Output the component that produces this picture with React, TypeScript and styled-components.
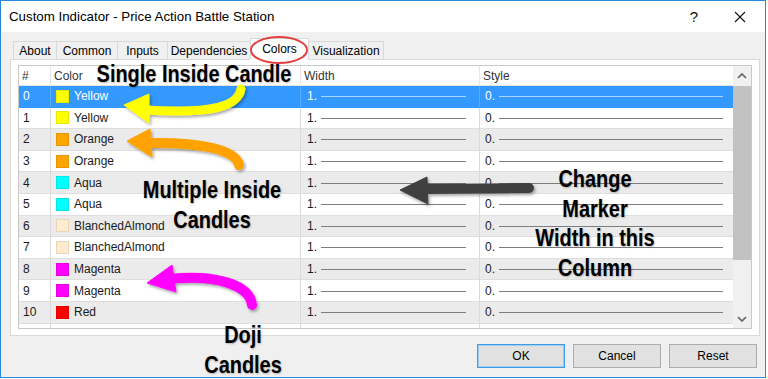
import React from "react";
import styled, { createGlobalStyle } from "styled-components";

const GlobalStyle = createGlobalStyle`
  html, body {
    margin: 0;
    padding: 0;
    background: #ffffff;
  }
  body {
    font-family: "Liberation Sans", Arial, sans-serif;
  }
  * {
    box-sizing: border-box;
  }
`;

const Window = styled.div`
  position: relative;
  width: 766px;
  height: 378px;
  border: 1px solid #2b88d8;
  background: #f0f0f0;
  display: flex;
  flex-direction: column;
  overflow: hidden;
`;

const TitleBar = styled.div`
  flex: none;
  height: 31px;
  display: flex;
  align-items: center;
  background: #ffffff;
  padding: 0 2px 0 8px;
  color: #000;
`;

const TitleText = styled.span`
  flex: 1;
  font-size: 13.3px;
`;

const CaptionButton = styled.div`
  width: 46px;
  height: 31px;
  display: flex;
  align-items: center;
  justify-content: center;
  font-size: 15px;
  color: #111;
`;

const Body = styled.div`
  flex: 1;
  display: flex;
  flex-direction: column;
  padding: 7px 5px 8px 9px;
`;

const TabStrip = styled.div`
  display: flex;
  align-items: flex-end;
  height: 21px;
  padding-left: 4px;
  margin-bottom: -1px;
  position: relative;
  z-index: 1;
`;

const Tab = styled.div<{ $width: number; $active?: boolean }>`
  width: ${({ $width }) => $width}px;
  height: ${({ $active }) => ($active ? 22 : 19)}px;
  margin-left: -1px;
  display: flex;
  align-items: center;
  justify-content: center;
  padding-bottom: ${({ $active }) => ($active ? 1 : 0)}px;
  font-size: 12px;
  color: #000;
  background: ${({ $active }) => ($active ? "#ffffff" : "#f0f0f0")};
  border: 1px solid #d9d9d9;
  border-bottom-color: ${({ $active }) => ($active ? "#ffffff" : "#d9d9d9")};
`;

const Panel = styled.div`
  width: 750px;
  height: 277px;
  background: #ffffff;
  border: 1px solid #d9d9d9;
  padding: 5px 7px 6px 7px;
`;

const Grid = styled.div`
  height: 264px;
  border: 1px solid #c8c8c8;
  display: flex;
  overflow: hidden;
`;

const Table = styled.div`
  flex: 1;
  display: flex;
  flex-direction: column;
  overflow: hidden;
`;

const columns = "32px 250px 179px 254px";

const HeaderRow = styled.div`
  flex: none;
  height: 20px;
  display: grid;
  grid-template-columns: ${columns};
  border-bottom: 1px solid #e2e2e2;
  background: #ffffff;
`;

const HeaderCell = styled.div`
  display: flex;
  align-items: center;
  padding-left: 3px;
  font-size: 12px;
  color: #333;
  border-right: 1px solid #e6e6e6;
`;

const Row = styled.div<{ $selected?: boolean; $shaded?: boolean }>`
  flex: none;
  height: 21.6px;
  display: grid;
  grid-template-columns: ${columns};
  font-size: 12px;
  color: ${({ $selected }) => ($selected ? "#ffffff" : "#1a1a1a")};
  background: ${({ $selected, $shaded }) =>
    $selected ? "#3399ff" : $shaded ? "#ebebeb" : "#ffffff"};
  border-bottom: 1px solid
    ${({ $selected }) => ($selected ? "#3399ff" : "#dedede")};
`;

const Cell = styled.div<{ $pad: number; $selected?: boolean }>`
  display: flex;
  align-items: center;
  padding-left: ${({ $pad }) => $pad}px;
  border-right: 1px solid
    ${({ $selected }) => ($selected ? "#5aaeff" : "#dadada")};
  overflow: hidden;
  white-space: nowrap;
`;

/* the row clipped by the grid's bottom edge: only its swatch top shows */
const ClippedCell = styled(Cell)`
  align-items: flex-start;
  padding-top: 4px;
`;

const Swatch = styled.span<{ $color: string }>`
  width: 13px;
  height: 13px;
  flex: none;
  margin-right: 5px;
  background: ${({ $color }) => $color};
  border: 1px solid rgba(0, 0, 0, 0.09);
`;

const ValueLine = styled.span<{ $trail: number; $selected?: boolean }>`
  flex: 1;
  height: 1px;
  margin: 1px ${({ $trail }) => $trail}px 0 4px;
  background: ${({ $selected }) =>
    $selected ? "rgba(255,255,255,0.6)" : "#7d7d7d"};
`;

const ScrollBar = styled.div`
  width: 18px;
  flex: none;
  display: flex;
  flex-direction: column;
  background: #f0f0f0;
`;

const ScrollArrow = styled.div<{ $height: number }>`
  height: ${({ $height }) => $height}px;
  flex: none;
  display: flex;
  align-items: center;
  justify-content: center;
`;

const ScrollTrack = styled.div`
  flex: 1;
`;

const ScrollThumb = styled.div`
  height: 174px;
  background: #c2c2c2;
`;

const ButtonRow = styled.div`
  display: flex;
  justify-content: flex-end;
  gap: 8px;
  margin-top: 8px;
  padding-right: 3px;
`;

const Button = styled.button<{ $default?: boolean }>`
  width: 88px;
  height: 24px;
  padding: 0;
  font-family: "Liberation Sans", Arial, sans-serif;
  font-size: 12px;
  color: #000;
  background: #e1e1e1;
  border: 1px solid ${({ $default }) => ($default ? "#3f9be3" : "#adadad")};
  box-shadow: ${({ $default }) => ($default ? "inset 0 0 0 1px #9fcdf1" : "none")};
`;

const Overlay = styled.div`
  position: absolute;
  top: -1px;
  left: -1px;
  width: 766px;
  height: 378px;
  z-index: 5;
  pointer-events: none;
`;

const ArrowLayer = styled.svg`
  position: absolute;
  inset: 0;
`;

const Callout = styled.div<{ $x: number; $y: number }>`
  position: absolute;
  left: ${({ $x }) => $x}px;
  top: ${({ $y }) => $y}px;
  transform: translateX(-50%) scaleX(0.83);
  font-family: "Liberation Sans", Arial, sans-serif;
  font-weight: bold;
  font-size: 24px;
  line-height: 29.5px;
  text-align: center;
  white-space: nowrap;
  color: #000;
  text-shadow: 1px 1px 2px rgba(0, 0, 0, 0.25);
`;

type ColorRow = { name: string; hex: string };

const rows: ColorRow[] = [
  { name: "Yellow", hex: "#ffff00" },
  { name: "Yellow", hex: "#ffff00" },
  { name: "Orange", hex: "#ffa500" },
  { name: "Orange", hex: "#ffa500" },
  { name: "Aqua", hex: "#00ffff" },
  { name: "Aqua", hex: "#00ffff" },
  { name: "BlanchedAlmond", hex: "#ffebcd" },
  { name: "BlanchedAlmond", hex: "#ffebcd" },
  { name: "Magenta", hex: "#ff00ff" },
  { name: "Magenta", hex: "#ff00ff" },
  { name: "Red", hex: "#ff0000" },
];

const tabs = [
  { label: "About", width: 44 },
  { label: "Common", width: 62 },
  { label: "Inputs", width: 51 },
  { label: "Dependencies", width: 84 },
  { label: "Colors", width: 59, active: true },
  { label: "Visualization", width: 76 },
];

const Chevron = ({ down }: { down?: boolean }) => (
  <svg width="10" height="6" viewBox="0 0 10 6">
    <path
      d={down ? "M1 1 L5 5 L9 1" : "M1 5 L5 1 L9 5"}
      fill="none"
      stroke="#5f5f5f"
      strokeWidth="1.6"
    />
  </svg>
);

const Annotations = () => (
  <ArrowLayer width="766" height="378" viewBox="0 0 766 378">
    <defs>
      <filter id="shade" x="-20%" y="-20%" width="140%" height="160%">
        <feDropShadow dx="1.5" dy="2" stdDeviation="1.5" floodColor="#000" floodOpacity="0.35" />
      </filter>
    </defs>
    <ellipse cx="279" cy="50" rx="28" ry="13" fill="none" stroke="#e2403f" strokeWidth="2" />

    <g filter="url(#shade)" fill="#ffff00" stroke="#ffff00">
      <path d="M241 89 C238 106, 214 114, 146 110" fill="none" strokeWidth="9" strokeLinecap="round" />
      <polygon points="124,105 149,94 149,123" strokeWidth="1" strokeLinejoin="round" />
    </g>

    <g filter="url(#shade)" fill="#ffa200" stroke="#ffa200">
      <path d="M148 143 C202 142, 236 150, 239 165" fill="none" strokeWidth="10" strokeLinecap="round" />
      <polygon points="127,141 150,129 152,157" strokeWidth="1" strokeLinejoin="round" />
    </g>

    <g filter="url(#shade)" fill="#ff00ff" stroke="#ff00ff">
      <path d="M170 279 C216 274, 250 285, 252 305" fill="none" strokeWidth="10" strokeLinecap="round" />
      <polygon points="147,283 172,265 176,292" strokeWidth="1" strokeLinejoin="round" />
    </g>

    <g filter="url(#shade)" fill="#404040" stroke="#404040">
      <path d="M424 189 L529 188" fill="none" strokeWidth="10" strokeLinecap="round" />
      <polygon points="400,190 427,177 428,204" strokeWidth="1" strokeLinejoin="round" />
    </g>
  </ArrowLayer>
);

export default function App() {
  return (
    <>
      <GlobalStyle />
      <Window>
        <TitleBar>
          <TitleText>Custom Indicator - Price Action Battle Station</TitleText>
          <CaptionButton>?</CaptionButton>
          <CaptionButton>
            <svg width="12" height="12" viewBox="0 0 12 12">
              <path d="M1 1 L11 11 M11 1 L1 11" stroke="#111" strokeWidth="1.1" />
            </svg>
          </CaptionButton>
        </TitleBar>

        <Body>
          <TabStrip>
            {tabs.map((t) => (
              <Tab key={t.label} $width={t.width} $active={t.active}>
                {t.label}
              </Tab>
            ))}
          </TabStrip>

          <Panel>
            <Grid>
              <Table>
                <HeaderRow>
                  <HeaderCell>#</HeaderCell>
                  <HeaderCell>Color</HeaderCell>
                  <HeaderCell>Width</HeaderCell>
                  <HeaderCell>Style</HeaderCell>
                </HeaderRow>
                {rows.map((r, i) => {
                  const selected = i === 0;
                  return (
                    <Row key={i} $selected={selected} $shaded={i % 2 === 0}>
                      <Cell $pad={4} $selected={selected}>{i}</Cell>
                      <Cell $pad={5} $selected={selected}>
                        <Swatch $color={r.hex} />
                        {r.name}
                      </Cell>
                      <Cell $pad={6} $selected={selected}>
                        1.
                        <ValueLine $trail={13} $selected={selected} />
                      </Cell>
                      <Cell $pad={5} $selected={selected}>
                        0.
                        <ValueLine $trail={10} $selected={selected} />
                      </Cell>
                    </Row>
                  );
                })}
                <Row>
                  <ClippedCell $pad={4} />
                  <ClippedCell $pad={5}>
                    <Swatch $color="#8f86e8" />
                  </ClippedCell>
                  <ClippedCell $pad={6} />
                  <ClippedCell $pad={5} />
                </Row>
              </Table>
              <ScrollBar>
                <ScrollArrow $height={20}>
                  <Chevron />
                </ScrollArrow>
                <ScrollTrack>
                  <ScrollThumb />
                </ScrollTrack>
                <ScrollArrow $height={19}>
                  <Chevron down />
                </ScrollArrow>
              </ScrollBar>
            </Grid>
          </Panel>

          <ButtonRow>
            <Button $default>OK</Button>
            <Button>Cancel</Button>
            <Button>Reset</Button>
          </ButtonRow>
        </Body>

        <Overlay>
          <Annotations />
          <Callout $x={194} $y={59}>Single Inside Candle</Callout>
          <Callout $x={212} $y={175}>
            Multiple Inside
            <br />
            Candles
          </Callout>
          <Callout $x={595} $y={164}>
            Change
            <br />
            Marker
            <br />
            Width in this
            <br />
            Column
          </Callout>
          <Callout $x={243} $y={320}>
            Doji
            <br />
            Candles
          </Callout>
        </Overlay>
      </Window>
    </>
  );
}
